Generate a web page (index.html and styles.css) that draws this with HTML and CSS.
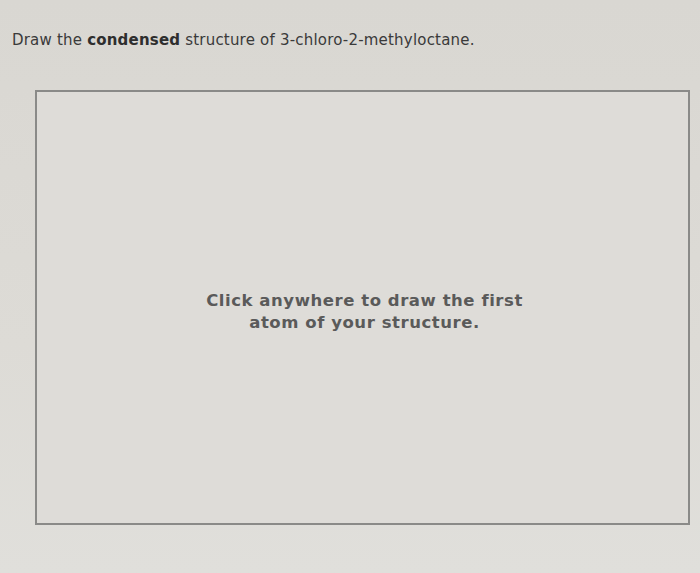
FILE: index.html
```html
<!DOCTYPE html>
<html>
<head>
<meta charset="utf-8">
<link rel="stylesheet" href="styles.css">
</head>
<body>
<div class="page">
  <p class="question">Draw the <b>condensed</b> structure of 3-chloro-2-methyloctane.</p>
  <div class="canvas">
    <div class="hint">Click anywhere to draw the first<br>atom of your structure.</div>
  </div>
</div>
</body>
</html>
```
FILE: styles.css
```css
html, body {
  margin: 0;
  padding: 0;
  background: #dbd9d4;
}
.page {
  width: 700px;
  height: 573px;
  box-sizing: border-box;
  padding: 31px 0 0 12px;
  font-family: "DejaVu Sans", Verdana, sans-serif;
  background: linear-gradient(180deg, #d9d7d2 0%, #dddbd6 60%, #e0dfdb 100%);
}
.question {
  margin: 0;
  font-size: 15px;
  line-height: 18px;
  letter-spacing: 0.2px;
  color: #3a3a3a;
}
.question b {
  color: #2e2e2e;
}
.canvas {
  margin: 41px 0 0 23px;
  width: 655px;
  height: 435px;
  box-sizing: border-box;
  border: 2px solid #8a8a88;
  background: #dedcd8;
  display: flex;
  align-items: center;
  justify-content: center;
}
.hint {
  font-size: 16.5px;
  font-weight: bold;
  line-height: 22px;
  letter-spacing: 0.55px;
  text-align: center;
  color: #5a5a5a;
  margin: 8px 0 0 4px;
}
```
